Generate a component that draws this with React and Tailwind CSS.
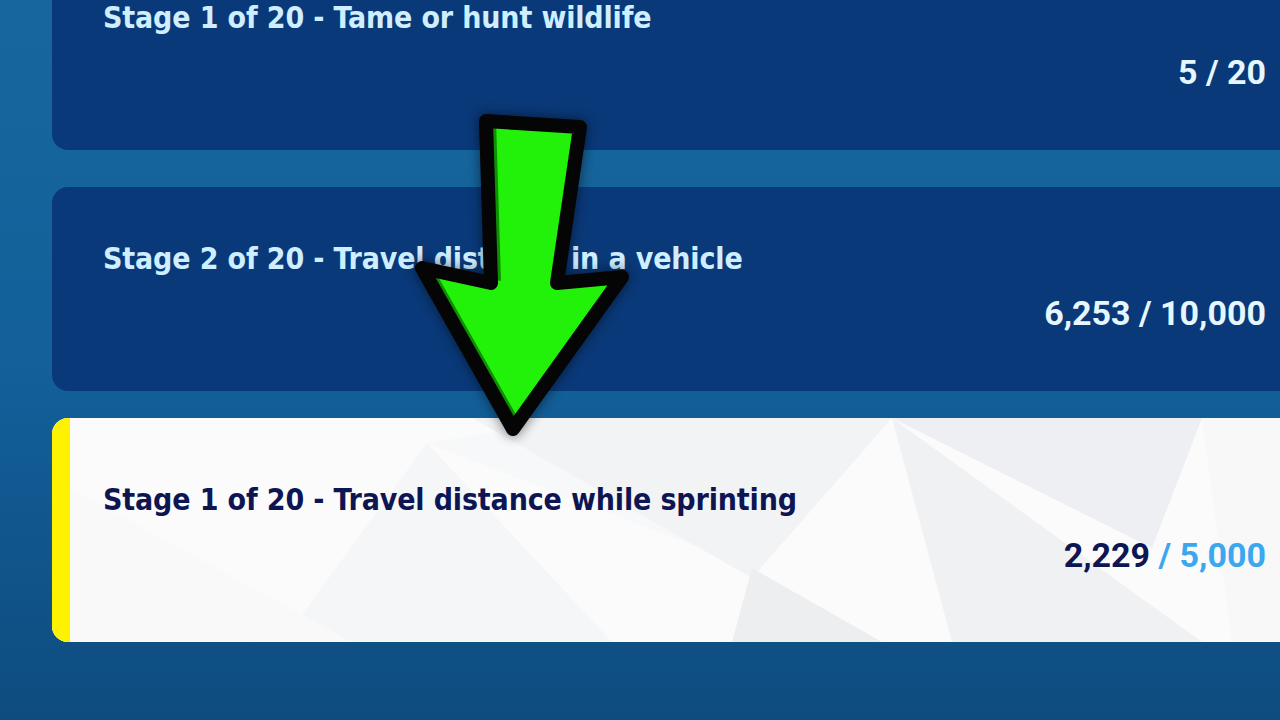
import React from "react";

const titleFont = { fontFamily: '"DejaVu Sans Condensed", "Liberation Sans", sans-serif' };
const numFont = { fontFamily: 'Roboto, "Liberation Sans", sans-serif' };

function BlueCard({ title, value, className }) {
  return (
    <div className={`h-[204px] rounded-l-2xl bg-[#0a3979] pl-[51px] pr-[14px] pt-[54px] ${className || ""}`}>
      <div className="text-[30px] leading-[36px] font-bold text-[#cfeeff] tracking-[-0.15px]" style={titleFont}>
        {title}
      </div>
      <div className="mt-[18px] text-right text-[34px] leading-[36px] font-bold text-[#e6f7ff]" style={numFont}>
        {value}
      </div>
    </div>
  );
}

function Arrow() {
  const pts = "486,121 580,127 557,283 622,277 513,429 422,268 491,283";
  return (
    <svg className="absolute left-0 top-0 pointer-events-none" width="1280" height="720" viewBox="0 0 1280 720">
      <defs>
        <clipPath id="arrowClip">
          <polygon points={pts} />
        </clipPath>
        <filter id="shadow" x="-20%" y="-20%" width="140%" height="140%">
          <feGaussianBlur stdDeviation="6" />
        </filter>
      </defs>
      <polygon points={pts} fill="#000" opacity="0.45" stroke="#000" strokeWidth="16" strokeLinejoin="round" filter="url(#shadow)" />
      <g clipPath="url(#arrowClip)">
        <polygon points={pts} fill="#0f8f06" />
        <polygon points={pts} fill="#22f20a" transform="translate(10,-2)" />
      </g>
      <polygon points={pts} fill="none" stroke="#050505" strokeWidth="14" strokeLinejoin="round" />
    </svg>
  );
}

export default function App() {
  return (
    <div className="relative w-[1280px] h-[720px] overflow-hidden bg-gradient-to-b from-[#17679c] via-[#13609a] to-[#0e4c7f]">
      <div className="flex flex-col pl-[52px] mt-[-54px]">
        <BlueCard title="Stage 1 of 20 - Tame or hunt wildlife" value="5 / 20" />
        <BlueCard className="mt-[37px]" title="Stage 2 of 20 - Travel distance in a vehicle" value="6,253 / 10,000" />
        <div className="relative mt-[27px] h-[224px] rounded-l-2xl overflow-hidden bg-[#fbfbfc] flex">
          <svg className="absolute left-0 top-0" width="1228" height="224" viewBox="0 0 1228 224">
            <polygon points="230,224 375,25 560,224" fill="#f5f6f7" />
            <polygon points="375,25 540,0 700,150" fill="#f7f8f9" />
            <polygon points="420,0 840,0 700,160" fill="#f2f3f5" />
            <polygon points="840,0 1150,0 1100,130" fill="#eeeff2" />
            <polygon points="840,0 900,224 1150,224" fill="#f0f1f3" />
            <polygon points="680,224 700,150 830,224" fill="#eceef0" />
            <polygon points="1150,0 1228,0 1228,224 1180,224" fill="#f8f8f9" />
            <polygon points="0,60 300,224 0,224" fill="#f9f9fa" />
          </svg>
          <div className="relative w-[18px] h-full bg-[#fff200]" />
          <div className="relative flex-1 pl-[33px] pr-[14px] pt-[64px]">
            <div className="text-[30px] leading-[36px] font-bold text-[#0d1652] tracking-[-0.15px]" style={titleFont}>
              Stage 1 of 20 - Travel distance while sprinting
            </div>
            <div className="mt-[19px] text-right text-[34px] leading-[36px] font-bold" style={numFont}>
              <span className="text-[#0d1652]">2,229</span>
              <span className="text-[#3aa7ef]"> / 5,000</span>
            </div>
          </div>
        </div>
      </div>
      <Arrow />
    </div>
  );
}
